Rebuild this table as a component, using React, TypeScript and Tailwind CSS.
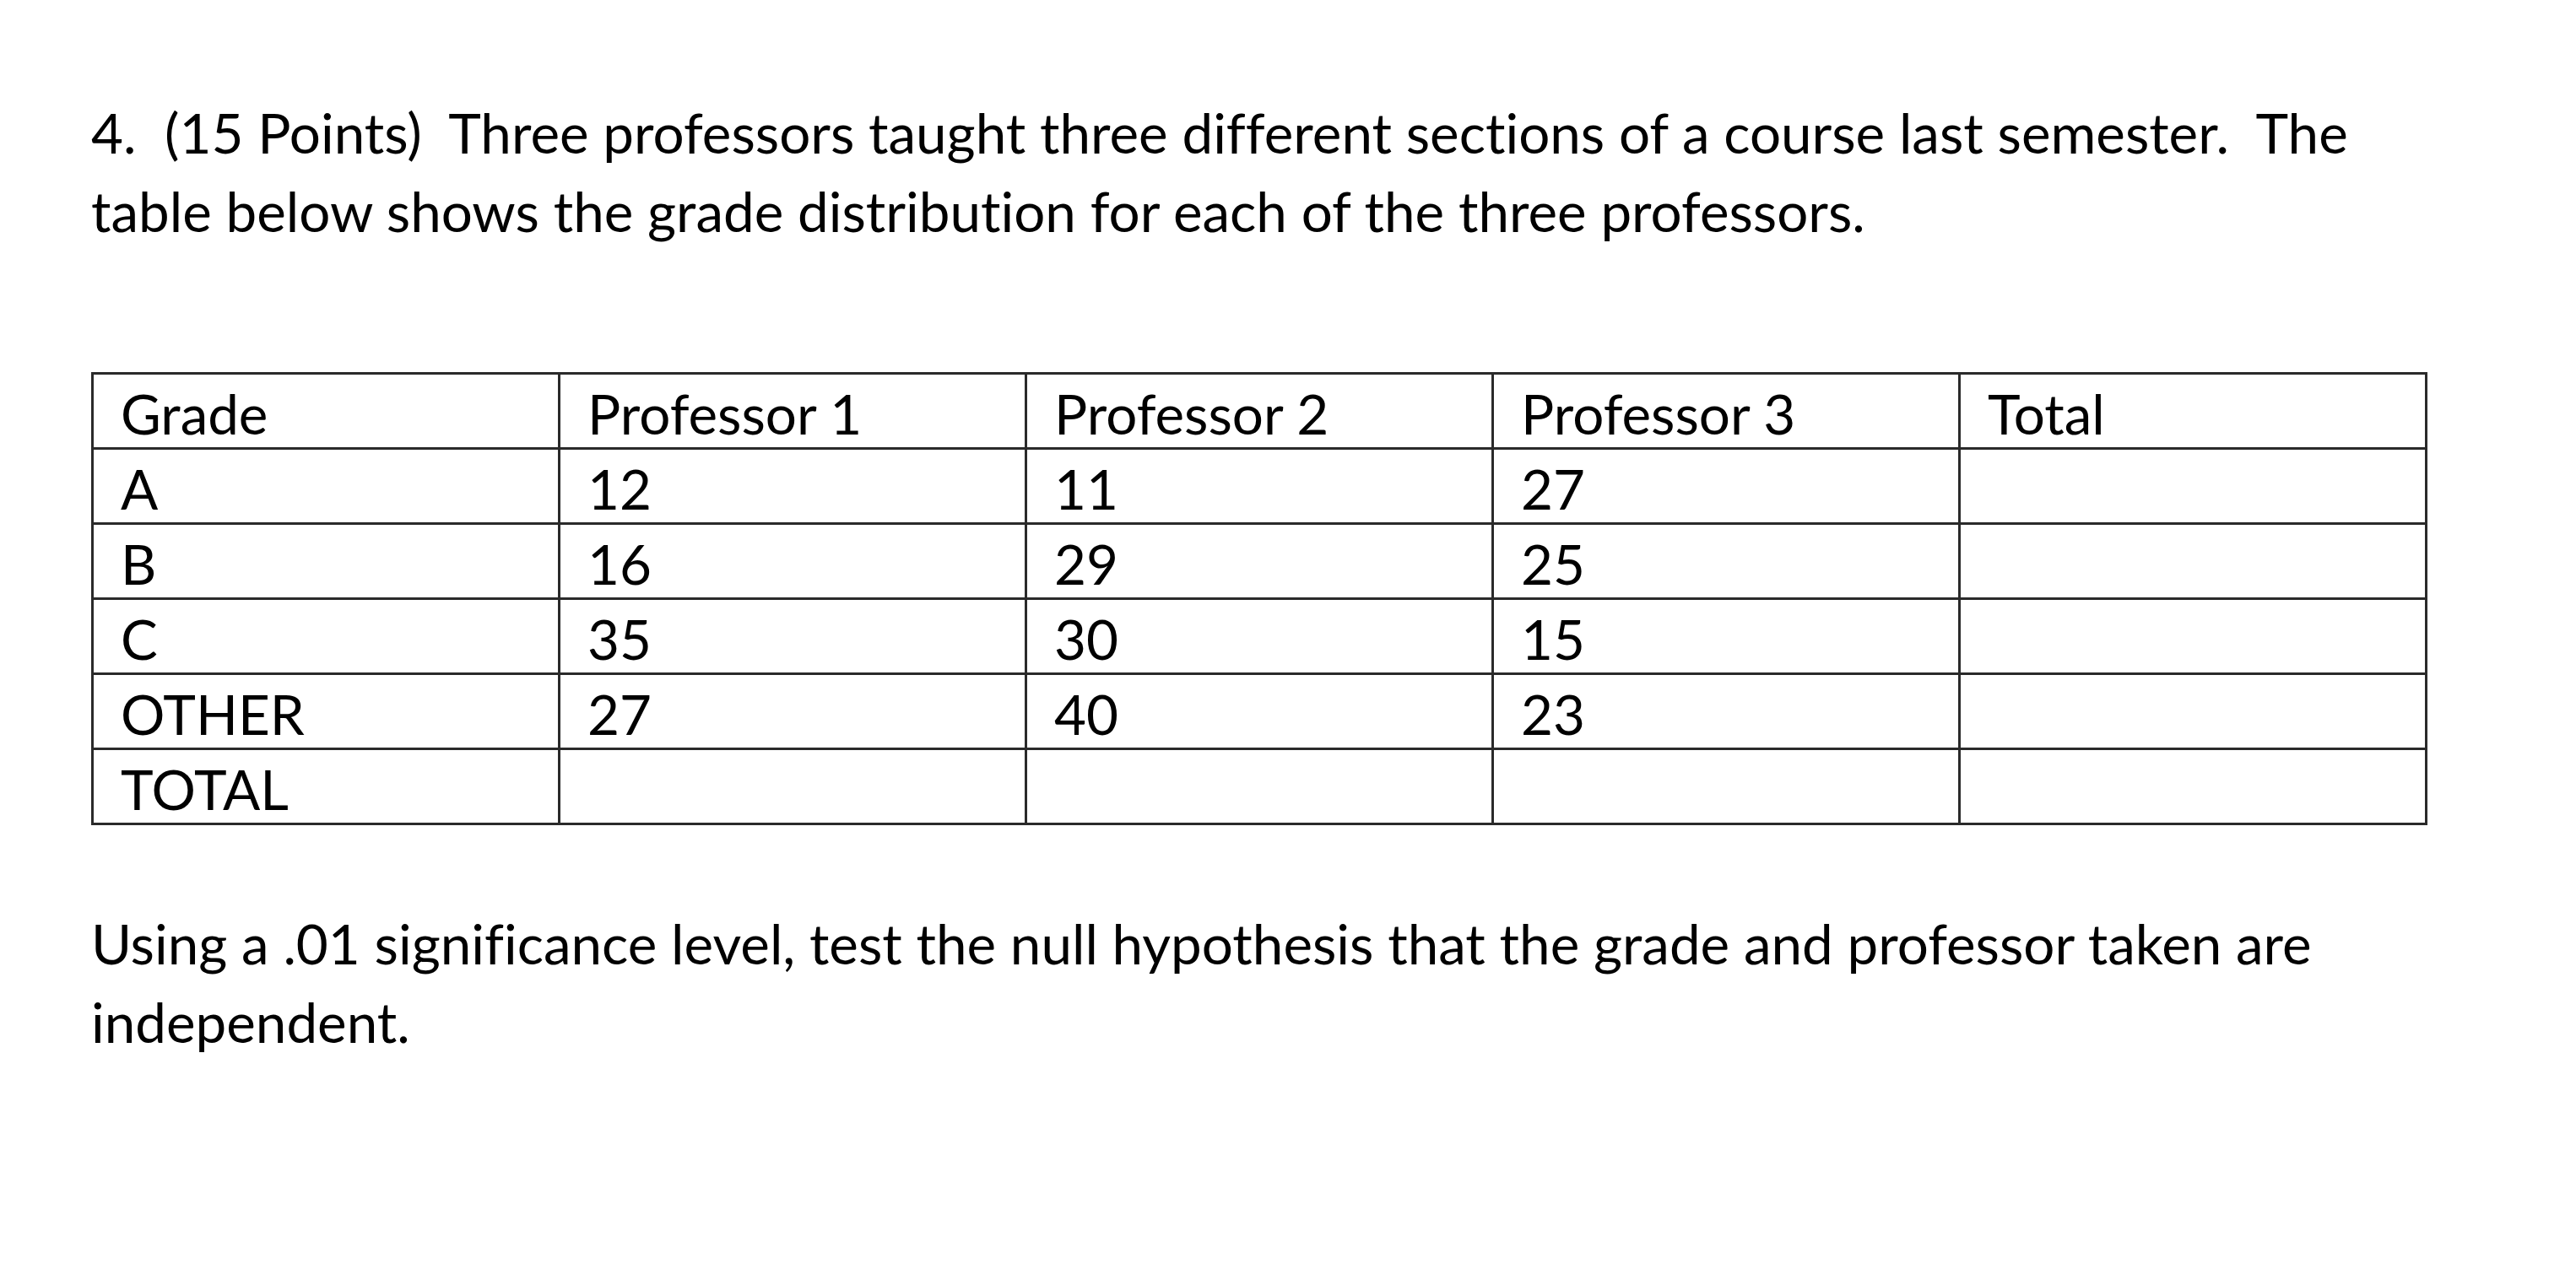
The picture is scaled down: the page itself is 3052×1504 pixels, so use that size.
import React from "react";

const rows: [string, string, string, string, string][] = [
  ["A", "12", "11", "27", ""],
  ["B", "16", "29", "25", ""],
  ["C", "35", "30", "15", ""],
  ["OTHER", "27", "40", "23", ""],
  ["TOTAL", "", "", "", ""],
];

const headers = ["Grade", "Professor 1", "Professor 2", "Professor 3", "Total"];

const cell = "border-[3px] border-[#2a2a2a] h-[89px] w-[553px] pl-[32px] pt-[13px] align-top text-left font-normal";

export default function App() {
  return (
    <div className="min-h-screen bg-white text-black font-['Lato',sans-serif] text-[65.5px] leading-[93px] [font-variant-ligatures:none] pl-[108px] pt-[110px]">
      <p>
        4.&nbsp; (15 Points)&nbsp; Three professors taught three different sections of a course last semester.&nbsp; The
        <br />
        table below shows the grade distribution for each of the three professors.
      </p>

      <table className="mt-[145px] border-collapse leading-[65px] table-fixed">
        <thead>
          <tr>
            {headers.map((h) => (
              <th key={h} className={cell}>
                {h}
              </th>
            ))}
          </tr>
        </thead>
        <tbody>
          {rows.map((r) => (
            <tr key={r[0]}>
              {r.map((v, i) => (
                <td key={i} className={cell}>
                  {v}
                </td>
              ))}
            </tr>
          ))}
        </tbody>
      </table>

      <p className="mt-[93px]">
        Using a .01 significance level, test the null hypothesis that the grade and professor taken are
        <br />
        independent.
      </p>
    </div>
  );
}
